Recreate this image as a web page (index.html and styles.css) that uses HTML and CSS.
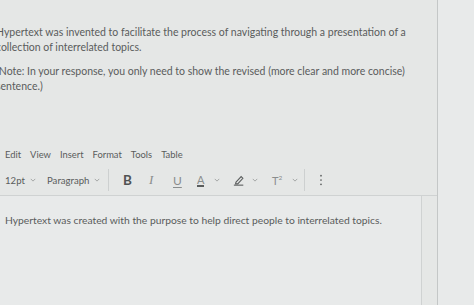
FILE: index.html
```html
<!DOCTYPE html>
<html lang="en">
<head>
  <meta charset="UTF-8">
  <meta name="viewport" content="width=device-width, initial-scale=1.0">
  <title>Quiz Question</title>
  <link rel="stylesheet" href="styles.css">
</head>
<body>
  <div class="page">
    <div class="main">
      <div class="question">
        <p>Hypertext was invented to facilitate the process of navigating through a presentation of a collection of interrelated topics.</p>
        <p>(Note: In your response, you only need to show the revised (more clear and more concise) sentence.)</p>
      </div>

      <div class="menubar">
        <span>Edit</span>
        <span>View</span>
        <span>Insert</span>
        <span>Format</span>
        <span>Tools</span>
        <span>Table</span>
      </div>

      <div class="toolbar">
        <div class="tool select size">12pt <svg class="chev" viewBox="0 0 8 5"><polyline points="1,1 4,4 7,1"/></svg></div>
        <div class="tool select block">Paragraph <svg class="chev" viewBox="0 0 8 5"><polyline points="1,1 4,4 7,1"/></svg></div>
        <div class="divider"></div>
        <div class="tool icon bold">B</div>
        <div class="tool icon italic">I</div>
        <div class="tool icon under">U</div>
        <div class="tool icon color">
          <span class="letter-a">A</span>
          <svg class="chev" viewBox="0 0 8 5"><polyline points="1,1 4,4 7,1"/></svg>
        </div>
        <div class="tool icon color pen-group">
          <svg class="pen" viewBox="0 0 14 14">
            <path d="M3.5 9.5 L9.5 3 L11.5 5 L5.5 11.5 L3 11.5 Z"/>
            <line x1="1" y1="13" x2="12" y2="13"/>
          </svg>
          <svg class="chev" viewBox="0 0 8 5"><polyline points="1,1 4,4 7,1"/></svg>
        </div>
        <div class="tool icon color sup">
          <span>T<sup>2</sup></span>
          <svg class="chev" viewBox="0 0 8 5"><polyline points="1,1 4,4 7,1"/></svg>
        </div>
        <div class="divider last"></div>
        <div class="tool more">
          <svg viewBox="0 0 4 14"><circle cx="2" cy="2" r="1"/><circle cx="2" cy="7" r="1"/><circle cx="2" cy="12" r="1"/></svg>
        </div>
      </div>

      <div class="editor">
        <p>Hypertext was created with the purpose to help direct people to interrelated topics.</p>
      </div>
    </div>
    <div class="side"></div>
  </div>
</body>
</html>
```

FILE: styles.css
```css
body {
  font-family: Lato, "Open Sans", sans-serif;
  background-color: #e5e7e6;
  color: #5a5c5c;
  margin: 0;
  padding: 0;
  overflow: hidden;
}
.page {
  display: flex;
  height: 305px;
}
.main {
  width: 437px;
  border-right: 1px solid #c4c7c7;
  display: flex;
  flex-direction: column;
}
.side {
  flex: 1;
  background-color: #e8eaea;
}
.question {
  margin-left: -4px;
  padding-top: 25px;
  font-size: 10.5px;
  line-height: 15px;
}
.question p {
  margin: 0 0 9px 0;
  width: 418px;
}
.menubar {
  display: flex;
  gap: 9px;
  margin-top: 45px;
  padding-left: 5px;
  font-size: 9.4px;
  line-height: 14px;
}
.toolbar {
  display: flex;
  align-items: center;
  height: 24px;
  margin-top: 6px;
  padding-left: 5px;
  border-bottom: 1px solid #cfd2d2;
  padding-bottom: 3px;
  font-size: 9.6px;
}
.tool {
  display: flex;
  align-items: center;
  gap: 5px;
}
.select.size {
  width: 42px;
}
.select.block {
  width: 56px;
}
.chev {
  width: 6px;
  height: 4px;
  fill: none;
  stroke: #8f9292;
  stroke-width: 1;
}
.divider {
  width: 1px;
  height: 22px;
  background-color: #cdd0d0;
  margin: 0 14px 0 5px;
}
.divider.last {
  margin: 0 14px 0 0;
}
.icon {
  font-size: 13px;
  color: #8a8d8d;
}
.bold {
  width: 26px;
  font-weight: 700;
  font-size: 13.5px;
  color: #505353;
}
.italic {
  width: 24px;
  font-family: "Liberation Serif", serif;
  font-style: italic;
  font-size: 13px;
}
.under {
  width: 24px;
  text-decoration: underline;
  text-underline-offset: 2px;
  font-size: 12px;
}
.color {
  width: 36px;
  gap: 10px;
}
.pen-group {
  width: 39px;
  gap: 7px;
}
.sup {
  width: 32px;
}
.letter-a {
  font-size: 11px;
  border-bottom: 2px solid #5a5d5d;
  line-height: 11px;
}
.pen {
  width: 12px;
  height: 12px;
  fill: none;
  stroke: #5c5f5f;
  stroke-width: 1.3;
}
.sup span {
  font-size: 11px;
}
.sup sup {
  font-size: 6.5px;
}
.more svg {
  width: 4px;
  height: 12px;
  fill: #5c5f5f;
}
.editor {
  flex: 1;
  width: 422px;
  border-right: 1px solid #cfd2d2;
  background-color: #e8eaea;
  padding-top: 18px;
  padding-left: 5px;
  box-sizing: border-box;
  font-size: 10.3px;
}
.editor p {
  margin: 0;
}
```
